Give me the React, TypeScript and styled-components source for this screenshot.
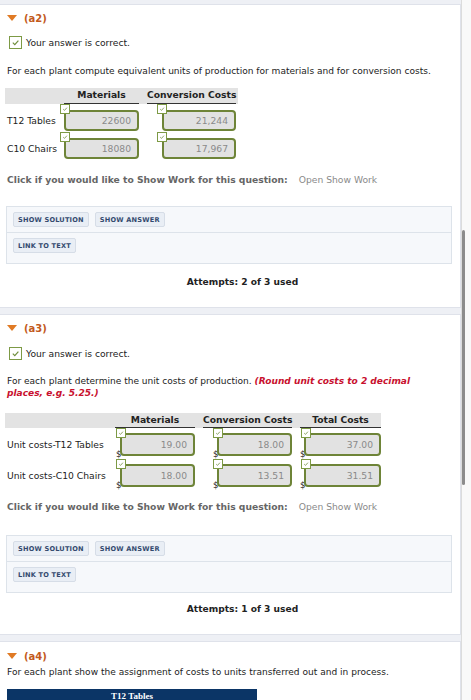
import React from 'react';
import styled, { createGlobalStyle } from 'styled-components';

const Global = createGlobalStyle`
  html, body { margin: 0; padding: 0; background: #fff; overflow: hidden; }
  body { font-family: "DejaVu Sans", Verdana, sans-serif; color: #222; }
`;

const Page = styled.div`
  display: flex;
  width: 471px;
  height: 700px;
  overflow: hidden;
`;

const Content = styled.div`
  width: 461px;
  display: flex;
  flex-direction: column;
  background: #eef0f5;
  padding-top: 4px;
  gap: 6px;
`;

const Track = styled.div`
  width: 10px;
  background: #f9f9f9;
  border-left: 1px solid #dcdcdc;
  box-sizing: border-box;
  padding-top: 230px;
`;

const Thumb = styled.div`
  width: 3px;
  height: 255px;
  border-radius: 2px;
  background: #8c8c8c;
`;

const Card = styled.section<{ $pt: number }>`
  background: #fff;
  border-top: 1px solid #dfe2ea;
  border-right: 1px solid #dfe2ea;
  border-bottom: 1px solid #dfe2ea;
  padding: ${p => p.$pt}px 0 0 7px;
  flex-shrink: 0;
`;

const Heading = styled.div`
  display: flex;
  align-items: center;
  gap: 7px;
  color: #c35a1c;
  font-weight: bold;
  font-size: 10px;
  height: 14px;
`;

const Triangle = styled.span`
  width: 0;
  height: 0;
  border-left: 5px solid transparent;
  border-right: 5px solid transparent;
  border-top: 6px solid #e07a24;
`;

const Correct = styled.div<{ $top: number }>`
  display: flex;
  align-items: center;
  gap: 4px;
  height: 13px;
  margin: ${p => p.$top}px 0 0 2px;
  font-size: 9.2px;
`;

const CheckBox = styled.span<{ $size: number }>`
  display: inline-flex;
  align-items: center;
  justify-content: center;
  width: ${p => p.$size}px;
  height: ${p => p.$size}px;
  box-sizing: border-box;
  border: 1px solid #7d9a45;
  background: #fff;
`;

const Text = styled.p<{ $top: number }>`
  margin: ${p => p.$top}px 0 0 0;
  font-size: 9.05px;
  line-height: 12px;
  padding-right: 20px;
`;

const Hint = styled.span`
  color: #c8102e;
  font-weight: bold;
  font-style: italic;
`;

const Grid = styled.div<{ $cols: string; $top: number; $head: number; $row: number }>`
  display: grid;
  grid-template-columns: ${p => p.$cols};
  grid-template-rows: ${p => p.$head}px;
  grid-auto-rows: ${p => p.$row}px;
  margin: ${p => p.$top}px 0 0 -2px;
  width: max-content;
  font-size: 9.2px;
`;

const HeadBar = styled.div<{ $cols: string }>`
  grid-column: 1 / -1;
  display: grid;
  grid-template-columns: ${p => p.$cols};
  background: #e3e3e3;
`;

const HeadCell = styled.div<{ $ml: number; $mr: number }>`
  font-weight: bold;
  font-size: 9.2px;
  white-space: nowrap;
  text-align: center;
  border-bottom: 1px solid #333;
  margin: 0 ${p => p.$mr}px 0 ${p => p.$ml}px;
  line-height: 14px;
`;

const Label = styled.div<{ $pt: number }>`
  display: flex;
  align-items: center;
  padding: ${p => p.$pt}px 0 0 2px;
  white-space: nowrap;
`;

const Cell = styled.div<{ $pl: number; $pr: number; $pb: number }>`
  display: flex;
  align-items: flex-end;
  padding: 0 ${p => p.$pr}px ${p => p.$pb}px ${p => p.$pl}px;
  position: relative;
`;

const Dollar = styled.span`
  font-size: 8.5px;
  width: 4px;
  line-height: 8px;
  margin-bottom: -2px;
`;

const Input = styled.div<{ $h: number }>`
  flex: 1;
  height: ${p => p.$h}px;
  box-sizing: border-box;
  border: 2px solid #6e8438;
  border-radius: 4px;
  background: #e2e2e2;
  color: #8a8a8a;
  font-size: 9.2px;
  padding-right: 6px;
  display: flex;
  align-items: center;
  justify-content: flex-end;
`;

const Badge = styled.span<{ $left: number }>`
  position: absolute;
  top: 0;
  left: ${p => p.$left}px;
  display: flex;
`;

const Work = styled.div<{ $top: number }>`
  display: flex;
  gap: 11px;
  margin-top: ${p => p.$top}px;
  font-size: 9.2px;
  line-height: 12px;
  font-weight: bold;
  color: #666;
`;

const OpenLink = styled.span`
  font-weight: normal;
  color: #8a8a8a;
`;

const Panel = styled.div<{ $top: number }>`
  margin: ${p => p.$top}px 8px 0 -1px;
  border: 1px solid #dde3ea;
  background: #f6f8fb;
`;

const PanelRow = styled.div<{ $last?: boolean }>`
  display: flex;
  gap: 6px;
  padding: 5px 6px;
  border-bottom: ${p => (p.$last ? 'none' : '1px solid #dde3ea')};
  height: ${p => (p.$last ? 20 : 15)}px;
`;

const SmallButton = styled.span`
  display: inline-flex;
  align-items: center;
  padding: 0 4px;
  height: 15px;
  box-sizing: border-box;
  background: #e9eef5;
  border: 1px solid #d6dde7;
  border-radius: 2px;
  color: #33496e;
  font-size: 6.6px;
  font-weight: bold;
  letter-spacing: 0.2px;
`;

const Attempts = styled.div<{ $top: number; $bottom: number }>`
  text-align: center;
  font-weight: bold;
  font-size: 9.1px;
  line-height: 12px;
  margin: ${p => p.$top}px 0 ${p => p.$bottom}px 18px;
`;

const NavyBar = styled.div`
  width: 250px;
  height: 14px;
  margin-top: 11px;
  background: #0b3566;
  color: #fff;
  font-family: "Liberation Serif", "Times New Roman", serif;
  font-weight: bold;
  font-size: 9px;
  text-align: center;
  line-height: 14px;
`;

const Tick = ({ size }: { size: number }) => (
  <CheckBox $size={size}>
    <svg width={size - 4} height={size - 4} viewBox="0 0 10 10">
      <path d="M2 5.2 L4.2 7.3 L8.2 2.8" fill="none" stroke="#6e8d3a" strokeWidth="1.3" />
    </svg>
  </CheckBox>
);

type Col = { title: string; width: number; pl: number; pr: number; ml: number; mr: number; badge: number };

type Row = { label: string; values: string[] };

function AnswerTable({
  labelWidth,
  cols,
  rows,
  head,
  row,
  input,
  pb,
  labelPt,
  dollar,
  top,
}: {
  labelWidth: number;
  cols: Col[];
  rows: Row[];
  head: number;
  row: number;
  input: number;
  pb: number;
  labelPt: number;
  dollar?: boolean;
  top: number;
}) {
  const template = [labelWidth, ...cols.map(c => c.width)].map(w => `${w}px`).join(' ');
  return (
    <Grid $cols={template} $top={top} $head={head} $row={row}>
      <HeadBar $cols={template}>
        <div />
        {cols.map(c => (
          <HeadCell key={c.title} $ml={c.ml} $mr={c.mr}>
            {c.title}
          </HeadCell>
        ))}
      </HeadBar>
      {rows.map(r => (
        <React.Fragment key={r.label}>
          <Label $pt={labelPt}>{r.label}</Label>
          {r.values.map((v, i) => (
            <Cell key={i} $pl={cols[i].pl} $pr={cols[i].pr} $pb={pb}>
              {dollar && <Dollar>$</Dollar>}
              <Input $h={input}>{v}</Input>
              <Badge $left={cols[i].badge}>
                <Tick size={10} />
              </Badge>
            </Cell>
          ))}
        </React.Fragment>
      ))}
    </Grid>
  );
}

function ButtonPanel({ top }: { top: number }) {
  return (
    <Panel $top={top}>
      <PanelRow>
        <SmallButton>SHOW SOLUTION</SmallButton>
        <SmallButton>SHOW ANSWER</SmallButton>
      </PanelRow>
      <PanelRow $last>
        <SmallButton>LINK TO TEXT</SmallButton>
      </PanelRow>
    </Panel>
  );
}

function ShowWork({ top }: { top: number }) {
  return (
    <Work $top={top}>
      <span>Click if you would like to Show Work for this question:</span>
      <OpenLink>Open Show Work</OpenLink>
    </Work>
  );
}

const equivCols: Col[] = [
  { title: 'Materials', width: 82, pl: 2, pr: 5, ml: 2, mr: 5, badge: -2 },
  { title: 'Conversion Costs', width: 94, pl: 18, pr: 2, ml: 3, mr: 2, badge: 13 },
];

const unitCols: Col[] = [
  { title: 'Materials', width: 84, pl: 3, pr: 2, ml: 2, mr: 2, badge: 3 },
  { title: 'Conversion Costs', width: 99, pl: 16, pr: 4, ml: 6, mr: 4, badge: 16 },
  { title: 'Total Costs', width: 85, pl: 4, pr: 0, ml: 4, mr: 0, badge: 5 },
];

export default function App() {
  return (
    <Page>
      <Global />
      <Content>
        <Card $pt={6}>
          <Heading>
            <Triangle />
            (a2)
          </Heading>
          <Correct $top={11}>
            <Tick size={13} />
            Your answer is correct.
          </Correct>
          <Text $top={16}>
            For each plant compute equivalent units of production for materials and for conversion costs.
          </Text>
          <AnswerTable
            labelWidth={57}
            cols={equivCols}
            rows={[
              { label: 'T12 Tables', values: ['22600', '21,244'] },
              { label: 'C10 Chairs', values: ['18080', '17,967'] },
            ]}
            head={16}
            row={28}
            input={21}
            pb={1}
            labelPt={4}
            top={11}
          />
          <ShowWork top={14} />
          <ButtonPanel top={20} />
          <Attempts $top={12} $bottom={19}>Attempts: 2 of 3 used</Attempts>
        </Card>

        <Card $pt={6}>
          <Heading>
            <Triangle />
            (a3)
          </Heading>
          <Correct $top={12}>
            <Tick size={13} />
            Your answer is correct.
          </Correct>
          <Text $top={15}>
            For each plant determine the unit costs of production.{' '}
            <Hint>(Round unit costs to 2 decimal places, e.g. 5.25.)</Hint>
          </Text>
          <AnswerTable
            labelWidth={108}
            cols={unitCols}
            rows={[
              { label: 'Unit costs-T12 Tables', values: ['19.00', '18.00', '37.00'] },
              { label: 'Unit costs-C10 Chairs', values: ['18.00', '13.51', '31.51'] },
            ]}
            head={15}
            row={31}
            input={23}
            pb={3}
            labelPt={1}
            dollar
            top={14}
          />
          <ShowWork top={11} />
          <ButtonPanel top={22} />
          <Attempts $top={10} $bottom={19}>Attempts: 1 of 3 used</Attempts>
        </Card>

        <Card $pt={7}>
          <Heading>
            <Triangle />
            (a4)
          </Heading>
          <Text $top={3}>
            For each plant show the assignment of costs to units transferred out and in process.
          </Text>
          <NavyBar>T12 Tables</NavyBar>
        </Card>
      </Content>
      <Track>
        <Thumb />
      </Track>
    </Page>
  );
}
